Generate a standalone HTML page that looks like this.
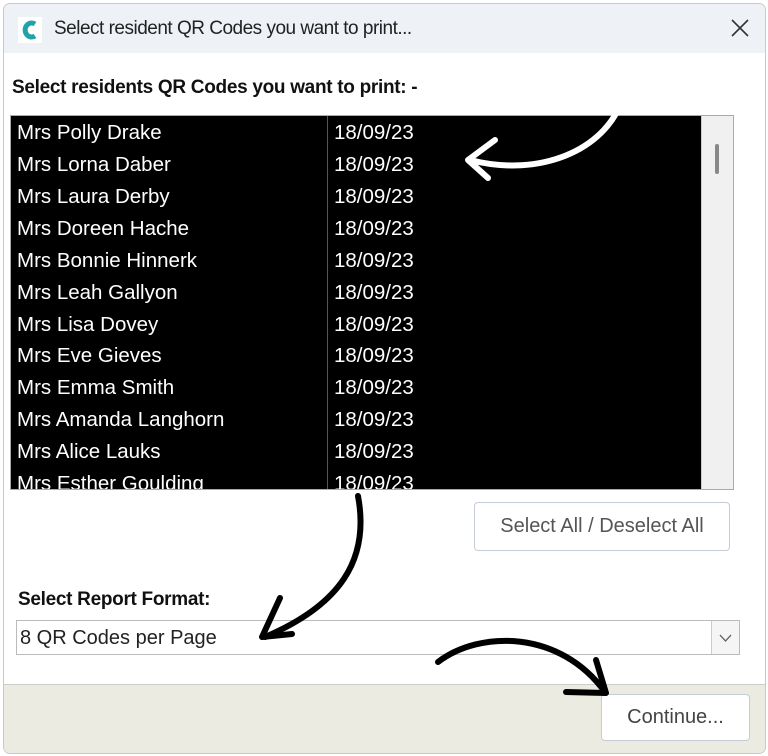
<!DOCTYPE html>
<html><head><style>
body{margin:0;width:768px;height:756px;background:#fff;position:relative;overflow:hidden;font-family:"Liberation Sans",sans-serif;}
.win{position:absolute;left:3px;top:3px;width:761px;height:749px;border:1px solid #c8c8c8;border-radius:7px;background:#fff;overflow:hidden}
.title{position:absolute;left:0;top:0;right:0;height:49px;background:#eef2f7;}
.title .t{position:absolute;left:50px;top:14px;font-size:19px;color:#222;letter-spacing:-0.5px}
.lbl{position:absolute;font-weight:bold;font-size:19px;color:#111;letter-spacing:-0.3px}
.list{position:absolute;left:10px;top:115px;width:722px;height:373px;border:1px solid #aaa;background:#000;overflow:hidden}
.sb{position:absolute;right:0;top:0;width:31px;height:100%;background:#f0f0f0;border-left:1px solid #ccc}
.thumb{position:absolute;left:13px;top:28px;width:4px;height:30px;background:#888;border-radius:2px}
.div{position:absolute;left:316px;top:0;width:1px;height:100%;background:#555}
.row{position:absolute;left:6px;height:32px;color:#fff;font-size:20.5px;line-height:32px;white-space:nowrap}
.row span{position:absolute;left:317px}
.btn{position:absolute;border:1px solid #c6ccd6;border-radius:4px;background:#fff;font-size:20px;color:#555;text-align:center}
.combo{position:absolute;left:16px;top:620px;width:724px;height:35px;border:1px solid #bbb;font-size:20px;line-height:35px;color:#222;padding-left:3px;box-sizing:border-box}
.dd{position:absolute;right:0;top:0;width:27px;height:33px;border-left:1px solid #ccc;background:#f5f5f5}
.foot{position:absolute;left:0;top:680px;right:0;bottom:0;background:#ecebe2;border-top:1px solid #ccc}
</style></head><body>
<div class="win">
<div class="title">
<svg style="position:absolute;left:14px;top:13px" width="24" height="26"><rect width="24" height="26" fill="#fff"/><path d="M17 7 A6.5 7 0 1 0 17 19" stroke="#1fa3a8" stroke-width="5" fill="none"/></svg>
<div class="t">Select resident QR Codes you want to print...</div>
<svg style="position:absolute;right:16px;top:15px" width="18" height="18"><path d="M1 1 L17 17 M17 1 L1 17" stroke="#333" stroke-width="1.6"/></svg>
</div>
<div class="lbl" style="left:8px;top:73px">Select residents QR Codes you want to print: -</div>
<div class="lbl" style="left:14px;top:585px">Select Report Format:</div>
<div class="foot"></div>
</div>
<div class="list">
<div class="div"></div>
<div class="row" style="top:1px">Mrs Polly Drake<span>18/09/23</span></div>
<div class="row" style="top:33px">Mrs Lorna Daber<span>18/09/23</span></div>
<div class="row" style="top:65px">Mrs Laura Derby<span>18/09/23</span></div>
<div class="row" style="top:97px">Mrs Doreen Hache<span>18/09/23</span></div>
<div class="row" style="top:129px">Mrs Bonnie Hinnerk<span>18/09/23</span></div>
<div class="row" style="top:161px">Mrs Leah Gallyon<span>18/09/23</span></div>
<div class="row" style="top:193px">Mrs Lisa Dovey<span>18/09/23</span></div>
<div class="row" style="top:224px">Mrs Eve Gieves<span>18/09/23</span></div>
<div class="row" style="top:256px">Mrs Emma Smith<span>18/09/23</span></div>
<div class="row" style="top:288px">Mrs Amanda Langhorn<span>18/09/23</span></div>
<div class="row" style="top:320px">Mrs Alice Lauks<span>18/09/23</span></div>
<div class="row" style="top:352px">Mrs Esther Goulding<span>18/09/23</span></div>
<div class="sb"><div class="thumb"></div></div>
</div>
<div class="btn" style="left:474px;top:502px;width:254px;height:47px;line-height:47px">Select All / Deselect All</div>
<div class="combo">8 QR Codes per Page<div class="dd"><svg width="27" height="33"><path d="M8 14 L13.5 20 L19 14" stroke="#666" stroke-width="1.3" fill="none"/></svg></div></div>
<div class="btn" style="left:601px;top:694px;width:147px;height:45px;line-height:45px;color:#444">Continue...</div>
<svg style="position:absolute;left:0;top:0" width="768" height="756">
<path d="M622 100 C605 150 540 178 470 160" stroke="#fff" stroke-width="6" fill="none" stroke-linecap="round"/>
<path d="M495 140 L468 160 L488 178" stroke="#fff" stroke-width="6" fill="none" stroke-linecap="round" stroke-linejoin="round"/>
<path d="M358 496 C370 560 340 605 265 637" stroke="#000" stroke-width="6" fill="none" stroke-linecap="round"/>
<path d="M280 598 L262 637 L292 634" stroke="#000" stroke-width="6" fill="none" stroke-linecap="round" stroke-linejoin="round"/>
<path d="M438 662 C480 630 560 630 605 692" stroke="#000" stroke-width="6" fill="none" stroke-linecap="round"/>
<path d="M596 660 L606 693 L566 692" stroke="#000" stroke-width="6" fill="none" stroke-linecap="round" stroke-linejoin="round"/>
</svg>
</body></html>
